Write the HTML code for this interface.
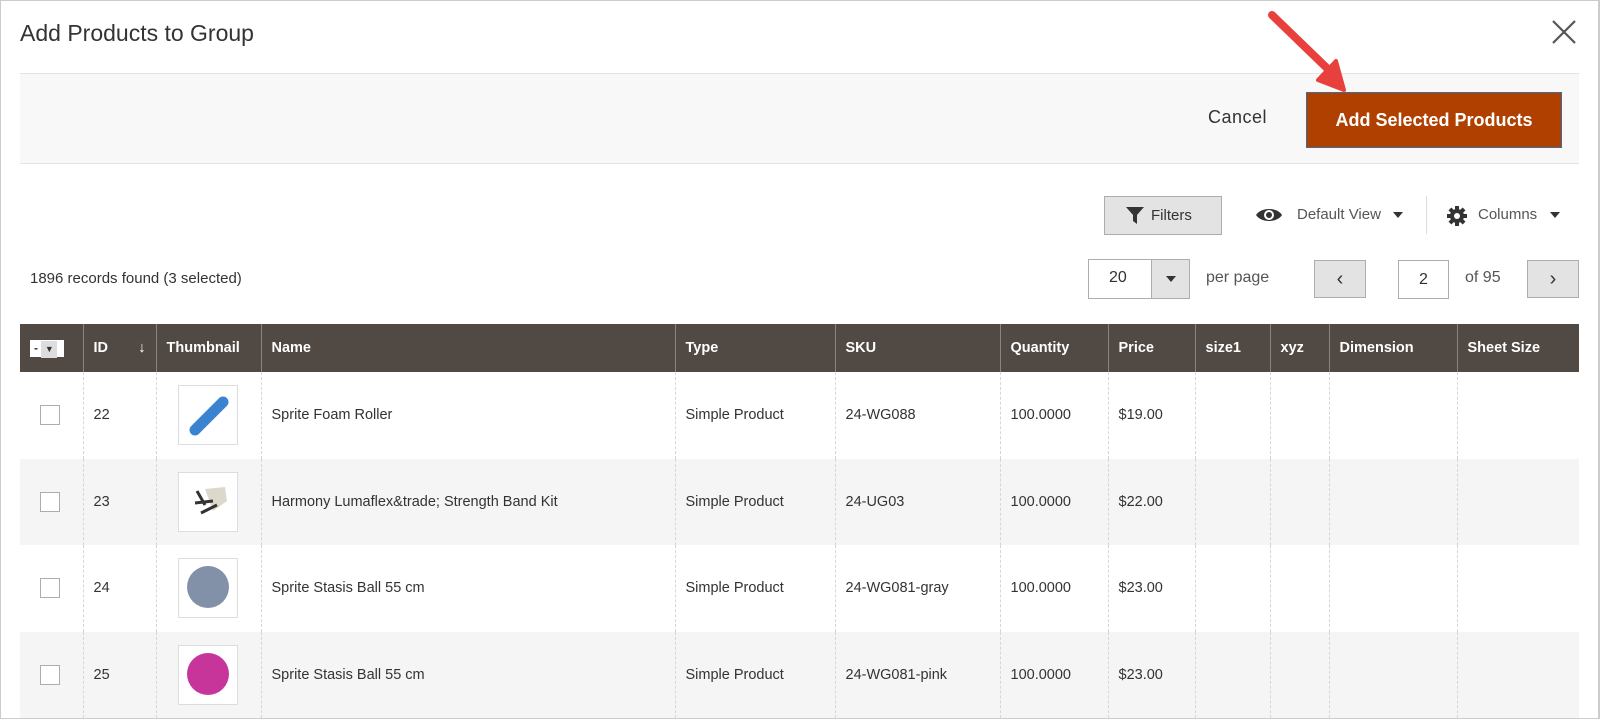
<!DOCTYPE html>
<html><head><meta charset="utf-8"><style>
*{box-sizing:border-box;margin:0;padding:0}
body{width:1600px;height:719px;overflow:hidden;background:#fff;font-family:"Liberation Sans",sans-serif;color:#333;position:relative}
.frame{position:absolute;left:0;top:0;width:1600px;height:719px;border:1px solid #ccc;border-right:2px solid #ccc}
.a{position:absolute}
.title{left:20px;top:20px;font-size:23px;color:#333}
.band{left:20px;top:73px;width:1559px;height:91px;background:#f8f8f8;border-top:1px solid #e3e3e3;border-bottom:1px solid #e3e3e3}
.btn{left:1306px;top:92px;width:256px;height:56px;background:#b04000;border:1px solid #3c6d9a;color:#fff;font-weight:bold;font-size:18px;text-align:center;line-height:54px}
.cancel{left:1208px;top:107px;font-size:18px;color:#333;letter-spacing:.5px}
.filters{left:1104px;top:196px;width:118px;height:39px;background:#e3e3e3;border:1px solid #adadad;font-size:15px;line-height:37px;padding-left:46px;color:#333}
.tb{font-size:15px;color:#555}
.sel{left:1088px;top:259px;width:102px;height:40px;border:1px solid #adadad;background:#fff}
.pbtn{width:52px;height:38px;background:#e3e3e3;border:1px solid #adadad;text-align:center;line-height:36px;font-size:20px;color:#333}
table{position:absolute;left:20px;top:324px;width:1559px;border-collapse:collapse;font-size:14.5px}
th{background:#514943;color:#fff;font-weight:bold;text-align:left;height:48px;padding:0 10px;border-left:1px solid #8a837f}
th:first-child{border-left:none}
td{height:86.5px;padding:0 10px;border-left:1px dashed #d6d6d6;color:#333}
td:first-child{border-left:none}
tr.g td{background:#f5f5f5}
.cb{width:20px;height:20px;border:1px solid #adadad;background:#fff;margin-left:10px}
.th{width:60px;height:60px;border:1px solid #ddd;background:#fff;margin-left:11px;display:flex;align-items:center;justify-content:center}
</style></head><body>
<div class="frame"></div>
<div class="a title">Add Products to Group</div>
<svg class="a" style="left:1552px;top:20px" width="24" height="24" viewBox="0 0 24 24"><path d="M1 1L23 23M23 1L1 23" stroke="#555" stroke-width="2.2"/></svg>
<div class="a band"></div>
<div class="a cancel">Cancel</div>
<div class="a btn">Add Selected Products</div>
<svg class="a" style="left:1262px;top:8px" width="100" height="90" viewBox="0 0 100 90"><path d="M10 7L70 65" stroke="#e8403c" stroke-width="8" stroke-linecap="round"/><path d="M82 82L56 72L74 53Z" fill="#e8403c" stroke="#e8403c" stroke-width="4" stroke-linejoin="round"/></svg>
<div class="a filters">Filters</div>
<svg class="a" style="left:1125px;top:205px" width="20" height="20" viewBox="0 0 20 20"><path d="M1 2H19L12 10V19L8 16V10Z" fill="#333"/></svg>
<svg class="a" style="left:1255px;top:206px" width="28" height="18" viewBox="0 0 28 18"><path d="M1 9C6 1 22 1 27 9C22 17 6 17 1 9Z" fill="#333"/><circle cx="14" cy="9" r="5" fill="#fff"/><circle cx="14" cy="9" r="3" fill="#333"/></svg>
<div class="a tb" style="left:1297px;top:206px">Default View</div>
<svg class="a" style="left:1393px;top:212px" width="10" height="6"><path d="M0 0H10L5 6Z" fill="#333"/></svg>
<div class="a" style="left:1426px;top:196px;width:1px;height:38px;background:#ddd"></div>
<svg class="a" style="left:1446px;top:205px" width="22" height="22" viewBox="0 0 22 22"><g fill="#333"><circle cx="11" cy="11" r="7"/><rect x="9" y="1" width="4" height="20"/><rect x="1" y="9" width="20" height="4"/><rect x="9" y="1" width="4" height="20" transform="rotate(45 11 11)"/><rect x="9" y="1" width="4" height="20" transform="rotate(-45 11 11)"/></g><circle cx="11" cy="11" r="3" fill="#fff"/></svg>
<div class="a tb" style="left:1478px;top:206px">Columns</div>
<svg class="a" style="left:1550px;top:212px" width="10" height="6"><path d="M0 0H10L5 6Z" fill="#333"/></svg>
<div class="a" style="left:30px;top:270px;font-size:15px;color:#333">1896 records found (3 selected)</div>
<div class="a sel"><span class="a" style="left:20px;top:9px;font-size:16px">20</span><div class="a" style="left:62px;top:0;width:38px;height:38px;background:#e3e3e3;border-left:1px solid #adadad"></div><svg class="a" style="left:77px;top:16px" width="10" height="6"><path d="M0 0H10L5 6Z" fill="#333"/></svg></div>
<div class="a tb" style="left:1206px;top:269px;font-size:16px">per page</div>
<div class="a pbtn" style="left:1314px;top:260px">&#8249;</div>
<div class="a" style="left:1398px;top:260px;width:51px;height:39px;border:1px solid #adadad;text-align:center;line-height:37px;font-size:16px">2</div>
<div class="a tb" style="left:1465px;top:269px;font-size:16px">of 95</div>
<div class="a pbtn" style="left:1527px;top:260px">&#8250;</div>
<table>
<colgroup><col style="width:63px"><col style="width:73px"><col style="width:105px"><col style="width:414px"><col style="width:160px"><col style="width:165px"><col style="width:108px"><col style="width:87px"><col style="width:75px"><col style="width:59px"><col style="width:128px"><col></colgroup>
<tr><th><span style="display:inline-block;width:34px;height:17px;background:#fff;color:#333;font-size:12px;line-height:17px;padding-left:4px">- <span style="display:inline-block;width:16px;background:#ddd;text-align:center;font-size:9px">▼</span></span></th><th>ID<span style="float:right">↓</span></th><th>Thumbnail</th><th>Name</th><th>Type</th><th>SKU</th><th>Quantity</th><th>Price</th><th>size1</th><th>xyz</th><th>Dimension</th><th>Sheet Size</th></tr>
<tr><td><div class="cb"></div></td><td>22</td><td><div class="th"><svg width="50" height="50"><path d="M12 40L40 12" stroke="#3a83d0" stroke-width="11" stroke-linecap="round"/></svg></div></td><td>Sprite Foam Roller</td><td>Simple Product</td><td>24-WG088</td><td>100.0000</td><td>$19.00</td><td></td><td></td><td></td><td></td></tr>
<tr class="g"><td><div class="cb"></div></td><td>23</td><td><div class="th"><svg width="50" height="50"><path d="M22 12L42 10L44 24L30 34Z" fill="#ddd8cc"/><path d="M14 14L22 28M12 26L30 24M18 36L34 28" stroke="#333" stroke-width="3"/></svg></div></td><td>Harmony Lumaflex&amp;trade; Strength Band Kit</td><td>Simple Product</td><td>24-UG03</td><td>100.0000</td><td>$22.00</td><td></td><td></td><td></td><td></td></tr>
<tr><td><div class="cb"></div></td><td>24</td><td><div class="th"><svg width="50" height="50"><circle cx="25" cy="24" r="21" fill="#8391a8"/></svg></div></td><td>Sprite Stasis Ball 55 cm</td><td>Simple Product</td><td>24-WG081-gray</td><td>100.0000</td><td>$23.00</td><td></td><td></td><td></td><td></td></tr>
<tr class="g"><td><div class="cb"></div></td><td>25</td><td><div class="th"><svg width="50" height="50"><circle cx="25" cy="24" r="21" fill="#c8359a"/></svg></div></td><td>Sprite Stasis Ball 55 cm</td><td>Simple Product</td><td>24-WG081-pink</td><td>100.0000</td><td>$23.00</td><td></td><td></td><td></td><td></td></tr>
</table>
</body></html>
